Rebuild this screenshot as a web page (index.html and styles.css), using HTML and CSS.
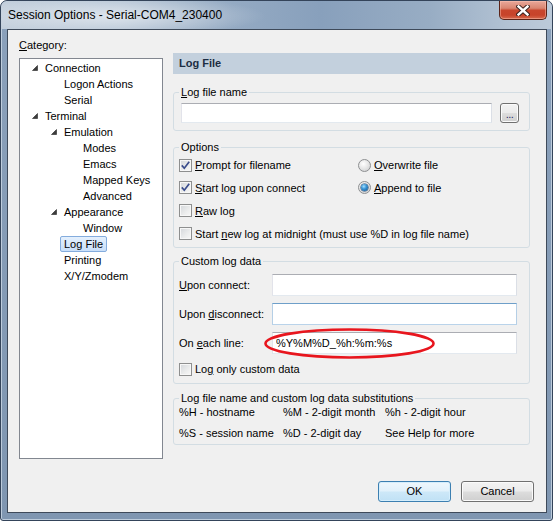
FILE: index.html
```html
<!DOCTYPE html>
<html>
<head>
<meta charset="utf-8">
<title>Session Options</title>
<link rel="stylesheet" href="styles.css">
</head>
<body>
<div class="window">
  <div class="titlebar">
    <span class="title">Session Options - Serial-COM4_230400</span>
    <div class="close">
      <svg width="14" height="11" viewBox="0 0 14 11"><path d="M2.5 1.5 L11.5 9.5 M11.5 1.5 L2.5 9.5" stroke="#3b2320" stroke-width="4.4" stroke-linecap="square" fill="none"/><path d="M2.5 1.5 L11.5 9.5 M11.5 1.5 L2.5 9.5" stroke="#ffffff" stroke-width="2.4" stroke-linecap="square" fill="none"/></svg>
    </div>
  </div>
  <div class="client">
    <div class="main">
      <div class="left">
        <div class="cat-label"><u>C</u>ategory:</div>
        <div class="tree">
          <div class="node l0"><span class="tw"><svg class="arrow" width="6" height="6" viewBox="0 0 6 6"><polygon points="5.5,0.5 5.5,5.5 0.5,5.5"/></svg></span><span class="lbl">Connection</span></div>
          <div class="node l1"><span class="tw"></span><span class="lbl">Logon Actions</span></div>
          <div class="node l1"><span class="tw"></span><span class="lbl">Serial</span></div>
          <div class="node l0"><span class="tw"><svg class="arrow" width="6" height="6" viewBox="0 0 6 6"><polygon points="5.5,0.5 5.5,5.5 0.5,5.5"/></svg></span><span class="lbl">Terminal</span></div>
          <div class="node l1"><span class="tw"><svg class="arrow" width="6" height="6" viewBox="0 0 6 6"><polygon points="5.5,0.5 5.5,5.5 0.5,5.5"/></svg></span><span class="lbl">Emulation</span></div>
          <div class="node l2"><span class="tw"></span><span class="lbl">Modes</span></div>
          <div class="node l2"><span class="tw"></span><span class="lbl">Emacs</span></div>
          <div class="node l2"><span class="tw"></span><span class="lbl">Mapped Keys</span></div>
          <div class="node l2"><span class="tw"></span><span class="lbl">Advanced</span></div>
          <div class="node l1"><span class="tw"><svg class="arrow" width="6" height="6" viewBox="0 0 6 6"><polygon points="5.5,0.5 5.5,5.5 0.5,5.5"/></svg></span><span class="lbl">Appearance</span></div>
          <div class="node l2"><span class="tw"></span><span class="lbl">Window</span></div>
          <div class="node l1 sel"><span class="tw"></span><span class="lbl">Log File</span></div>
          <div class="node l1"><span class="tw"></span><span class="lbl">Printing</span></div>
          <div class="node l1"><span class="tw"></span><span class="lbl">X/Y/Zmodem</span></div>
        </div>
      </div>
      <div class="right">
        <div class="header">Log File</div>

        <fieldset class="grp g-name">
          <legend><u>L</u>og file name</legend>
          <div class="name-row">
            <input class="input" type="text" value="">
            <div class="btn dots">...</div>
          </div>
        </fieldset>

        <fieldset class="grp g-opts">
          <legend>Options</legend>
          <div class="opts">
            <div class="chk"><span class="cb"><svg width="11" height="11" viewBox="0 0 11 11"><path d="M1.8 5.4 L4.3 8.2 L9.2 1.8" stroke="#3a4c8c" stroke-width="1.7" fill="none"/></svg></span><span><u>P</u>rompt for filename</span></div>
            <div class="chk"><span class="rb"></span><span><u>O</u>verwrite file</span></div>
            <div class="chk"><span class="cb"><svg width="11" height="11" viewBox="0 0 11 11"><path d="M1.8 5.4 L4.3 8.2 L9.2 1.8" stroke="#3a4c8c" stroke-width="1.7" fill="none"/></svg></span><span><u>S</u>tart log upon connect</span></div>
            <div class="chk"><span class="rb on"></span><span><u>A</u>ppend to file</span></div>
            <div class="chk span"><span class="cb"></span><span><u>R</u>aw log</span></div>
            <div class="chk span"><span class="cb"></span><span>Start <u>n</u>ew log at midnight (must use %D in log file name)</span></div>
          </div>
        </fieldset>

        <fieldset class="grp g-custom">
          <legend>Custom log data</legend>
          <div class="custom-grid">
            <span><u>U</u>pon connect:</span>
            <input class="input" type="text" value="">
            <span>Upon <u>d</u>isconnect:</span>
            <input class="input focus" type="text" value="">
            <span>On <u>e</u>ach line:</span>
            <div class="ann">
              <input class="input" type="text" value="%Y%M%D_%h:%m:%s">
              <svg class="ring" width="171" height="31" viewBox="0 0 171 31"><ellipse cx="85.5" cy="15.5" rx="84" ry="14" fill="none" stroke="#e8161e" stroke-width="2.6"/></svg>
            </div>
          </div>
          <div class="chk only"><span class="cb"></span><span>Lo<u>g</u> only custom data</span></div>
        </fieldset>

        <fieldset class="grp g-subs">
          <legend>Log file name and custom log data substitutions</legend>
          <div class="subs">
            <span>%H - hostname</span>
            <span>%M - 2-digit month</span>
            <span>%h - 2-digit hour</span>
            <span>%S - session name</span>
            <span>%D - 2-digit day</span>
            <span>See Help for more</span>
          </div>
        </fieldset>
      </div>
    </div>
    <div class="footer">
      <div class="btn ok">OK</div>
      <div class="btn cancel">Cancel</div>
    </div>
  </div>
</div>
</body>
</html>
```

FILE: styles.css
```css
* { box-sizing: border-box; }
html, body { margin: 0; padding: 0; }
body {
  width: 553px;
  height: 521px;
  overflow: hidden;
  background: #ffffff;
  font-family: "Liberation Sans", Arial, sans-serif;
  font-size: 11px;
  color: #000;
}
u { text-decoration: underline; text-underline-offset: 1px; }

.window {
  width: 553px;
  height: 521px;
  display: flex;
  flex-direction: column;
  background: linear-gradient(to bottom, #8ba1bb 0%, #7f96b1 100%);
  border: 1px solid #34445a;
  border-radius: 7px 7px 3px 3px;
  box-shadow: inset 0 0 0 1px rgba(214, 225, 236, 0.7);
  overflow: hidden;
}

.titlebar {
  height: 28px;
  flex: none;
  display: flex;
  justify-content: space-between;
  align-items: flex-start;
  padding-left: 7px;
  background:
    radial-gradient(ellipse 150px 20px at 115px 15px, rgba(255,255,255,0.55), rgba(255,255,255,0) 100%),
    linear-gradient(to right, #c3cfdc 0%, #b3c3d4 22%, #94aac3 42%, #88a0bc 58%, #98adc4 78%, #b2c2d3 92%, #bccad9 100%);
  border-radius: 6px 6px 0 0;
}
.title {
  font-family: "Liberation Sans", Arial, sans-serif;
  font-size: 12px;
  line-height: 28px;
  color: #000;
}
.close {
  width: 48px;
  height: 19px;
  margin-right: 5px;
  display: flex;
  align-items: center;
  justify-content: center;
  border: 1px solid #5b2419;
  border-top: none;
  border-radius: 0 0 5px 5px;
  background: linear-gradient(to bottom, #e9a89a 0%, #d98571 40%, #c8462d 52%, #c7432a 78%, #d66a4e 100%);
  box-shadow: inset 0 0 0 1px rgba(255, 200, 185, 0.45);
}

.client {
  flex: 1;
  margin: 0 5px 7px 6px;
  border: 1px solid #3e4a5a;
  background: #f0f0f0;
  display: flex;
  flex-direction: column;
  padding: 8px 12px 10px 11px;
}
.main {
  flex: 1;
  display: flex;
  gap: 10px;
}
.left {
  width: 144px;
  flex: none;
  display: flex;
  flex-direction: column;
}
.cat-label {
  height: 14px;
  line-height: 14px;
}
.tree {
  margin-top: 6px;
  height: 401px;
  border: 1px solid #828790;
  background: #fff;
  padding-top: 1px;
}
.node {
  height: 16px;
  display: flex;
  align-items: center;
}
.l0 { padding-left: 10px; }
.l1 { padding-left: 29px; }
.l2 { padding-left: 48px; }
.tw {
  width: 11px;
  height: 16px;
  flex: none;
  display: flex;
  align-items: center;
}
.arrow {
  display: block;
  margin-left: 2px;
  fill: #3c3c3c;
  stroke: #262626;
  stroke-width: 0.6;
}
.lbl {
  padding: 0 3px;
  line-height: 14px;
  border: 1px solid transparent;
  border-radius: 2px;
  white-space: nowrap;
}
.sel .lbl {
  background: linear-gradient(to bottom, #e4f0fd, #c9dff9);
  border-color: #84acdd;
}

.right {
  width: 357px;
  flex: none;
  margin-top: 15px;
  display: flex;
  flex-direction: column;
}
.header {
  height: 21px;
  line-height: 21px;
  padding-left: 6px;
  background: #c3d0dd;
  font-weight: bold;
  color: #1d2d42;
}

.grp {
  margin: 0;
  min-width: 0;
  border: 1px solid #d3dde3;
  border-radius: 3px;
}
.grp legend {
  padding: 0 2px;
  line-height: 13px;
  font-size: 11px;
}
.g-name {
  margin-top: 12px;
  padding: 4px 10px 7px 7px;
}
.g-name legend { margin-left: -2px; }
.name-row {
  display: flex;
  gap: 8px;
}
.input {
  display: block;
  margin: 0;
  height: 22px;
  width: 100%;
  padding: 0 3px;
  font-family: inherit;
  font-size: 11px;
  color: #000;
  background: #fff;
  border: 1px solid;
  border-color: #abadb3 #dbdfe6 #e3e9ef #e2e3ea;
  outline: none;
}
.name-row .input {
  flex: 1;
  height: 20px;
}
.input.focus {
  border-color: #6e9fc9 #b5cfe6 #b9d3ea #b5cfe6;
}
.btn {
  border: 1px solid #707070;
  border-radius: 3px;
  background: linear-gradient(to bottom, #f3f3f3 0%, #ebebeb 48%, #dddddd 52%, #cfcfcf 100%);
  box-shadow: inset 0 0 0 1px #fbfbfb;
  text-align: center;
}
.dots {
  width: 19px;
  height: 20px;
  flex: none;
  line-height: 20px;
  font-size: 11px;
  color: #2a2a6a;
  letter-spacing: -0.5px;
}

.g-opts {
  margin-top: 10px;
  padding: 0 5px 2px 5px;
}
.opts {
  display: grid;
  grid-template-columns: 179px 1fr;
  grid-template-rows: 22px 23px 23px 23px;
}
.chk {
  display: flex;
  align-items: center;
  gap: 3px;
  white-space: nowrap;
}
.span { grid-column: 1 / -1; }
.cb {
  width: 13px;
  height: 13px;
  flex: none;
  display: flex;
  align-items: center;
  justify-content: center;
  border: 1px solid #8e8f8f;
  background: linear-gradient(135deg, #d3d6da 0%, #eceded 60%, #f8f8f8 100%);
  box-shadow: inset 0 0 0 1px #f7f7f7;
}
.cb svg { display: block; }
.rb {
  width: 13px;
  height: 13px;
  flex: none;
  border-radius: 50%;
  border: 1px solid #8d8f91;
  background: radial-gradient(circle at 40% 35%, #ffffff 0%, #e8e8e8 45%, #c9cacc 100%);
  display: flex;
  align-items: center;
  justify-content: center;
}
.rb.on::after {
  content: "";
  width: 7px;
  height: 7px;
  border-radius: 50%;
  background: radial-gradient(circle at 40% 35%, #a6e1ff 0%, #3a95d6 40%, #0d4f8a 100%);
  box-shadow: 0 0 0 0.5px #1d3f66;
}

.g-custom {
  margin-top: 7px;
  padding: 6px 5px 3px 5px;
}
.custom-grid {
  display: grid;
  grid-template-columns: 93px 245px;
  grid-auto-rows: 22px;
  row-gap: 7px;
  align-items: center;
}
.ann {
  position: relative;
  height: 22px;
}
.ring {
  position: absolute;
  left: -8px;
  top: -4px;
  overflow: visible;
  pointer-events: none;
}
.only {
  margin-top: 4px;
  height: 22px;
}

.g-subs {
  margin-top: 8px;
  padding: 0 5px 4px 5px;
}
.subs {
  display: grid;
  grid-template-columns: 104px 102px auto;
  grid-template-rows: 14px 14px;
  row-gap: 7px;
  line-height: 14px;
  white-space: nowrap;
}

.footer {
  height: 21px;
  flex: none;
  display: flex;
  justify-content: flex-end;
  gap: 10px;
}
.footer .btn {
  width: 73px;
  height: 21px;
  line-height: 19px;
}
.ok {
  border-color: #3c7fb1;
  background: linear-gradient(to bottom, #eef7fd 0%, #e1f1fb 48%, #cde8f8 52%, #c0e1f5 100%);
  box-shadow: inset 0 0 0 1px #d5eefc;
}
```
